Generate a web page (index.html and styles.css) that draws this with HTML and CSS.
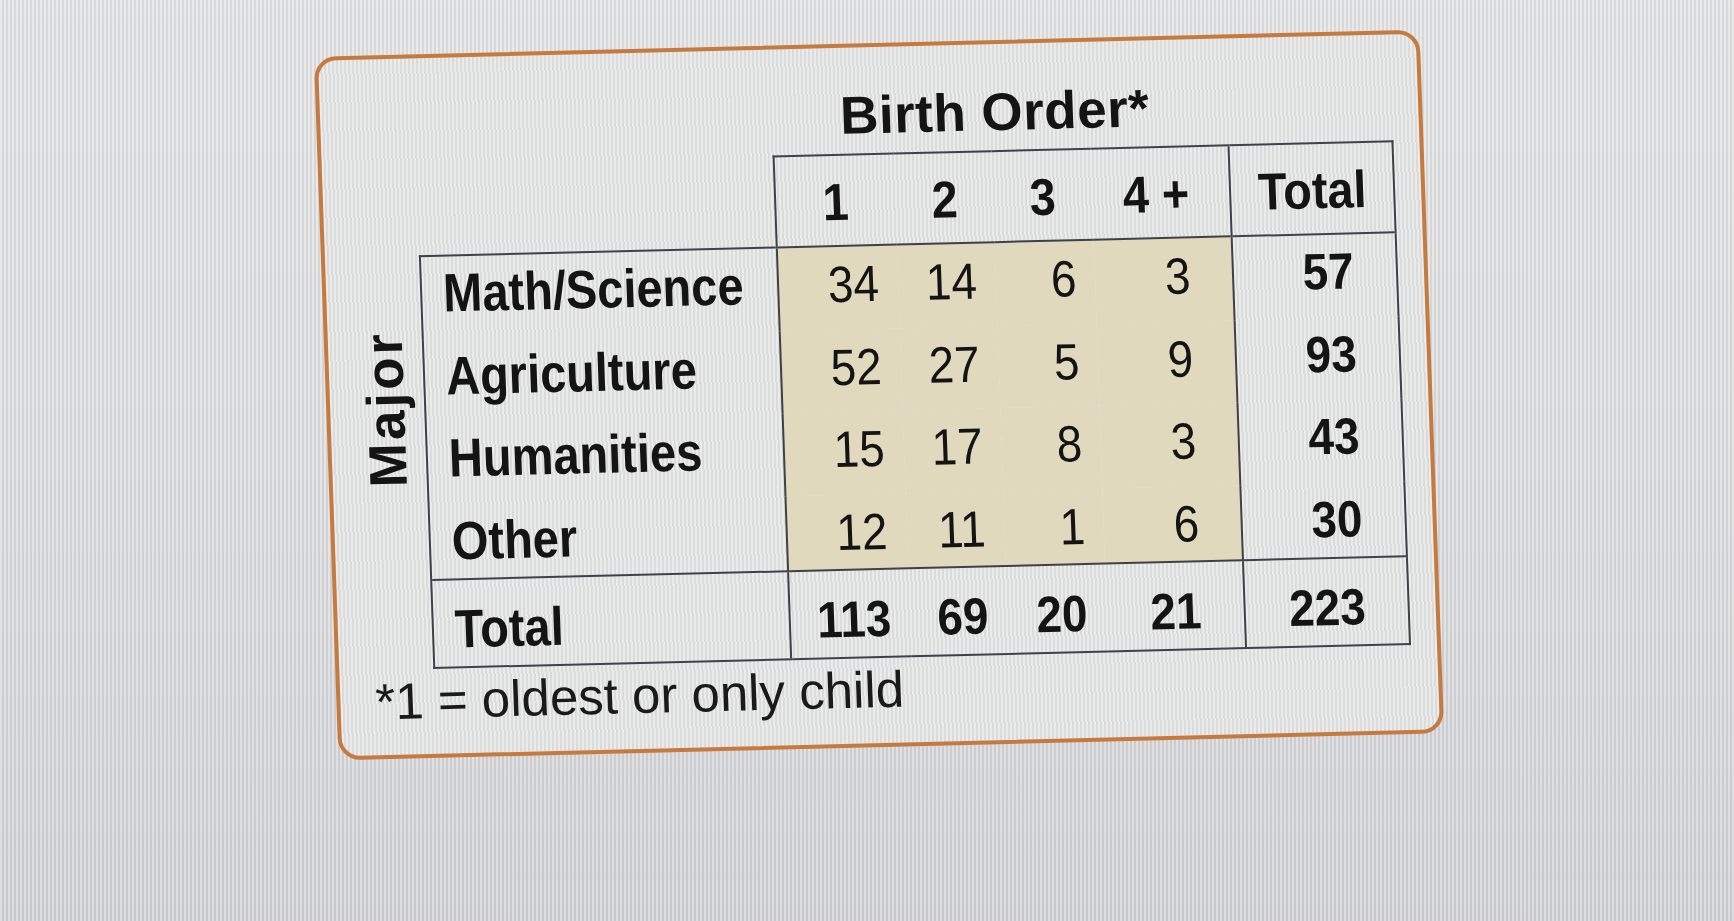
FILE: index.html
```html
<!DOCTYPE html>
<html lang="en">
<head>
<meta charset="utf-8">
<title>Birth Order by Major</title>
<link rel="stylesheet" href="styles.css">
</head>
<body>
<div class="stage">
  <div class="card">
    <table class="ct">
      <colgroup>
        <col class="w-major"><col class="w-label"><col class="w-c1"><col class="w-c2"><col class="w-c3"><col class="w-c4"><col class="w-tot">
      </colgroup>
      <tr class="r-title">
        <td></td><td></td><td colspan="4" class="title">Birth Order*</td><td></td>
      </tr>
      <tr class="r-head">
        <td></td><td></td>
        <td class="h h1"><span class="nc">1</span></td><td class="h"><span class="nc">2</span></td><td class="h"><span class="nc">3</span></td><td class="h h4"><span class="nc">4 +</span></td><td class="h tot"><span class="nc">Total</span></td>
      </tr>
      <tr class="r-body first r1">
        <td rowspan="4" class="major"><span class="major-text">Major</span></td>
        <td class="lab"><span class="nl">Math/Science</span></td>
        <td class="d d1"><span class="nr">34</span></td><td class="d d2"><span class="nr">14</span></td><td class="d d3"><span class="nr">6</span></td><td class="d d4"><span class="nr">3</span></td><td class="t"><span class="nr">57</span></td>
      </tr>
      <tr class="r-body r2">
        <td class="lab"><span class="nl">Agriculture</span></td>
        <td class="d d1"><span class="nr">52</span></td><td class="d d2"><span class="nr">27</span></td><td class="d d3"><span class="nr">5</span></td><td class="d d4"><span class="nr">9</span></td><td class="t"><span class="nr">93</span></td>
      </tr>
      <tr class="r-body r3">
        <td class="lab"><span class="nl">Humanities</span></td>
        <td class="d d1"><span class="nr">15</span></td><td class="d d2"><span class="nr">17</span></td><td class="d d3"><span class="nr">8</span></td><td class="d d4"><span class="nr">3</span></td><td class="t"><span class="nr">43</span></td>
      </tr>
      <tr class="r-body r4">
        <td class="lab"><span class="nl">Other</span></td>
        <td class="d d1"><span class="nr">12</span></td><td class="d d2"><span class="nr">11</span></td><td class="d d3"><span class="nr">1</span></td><td class="d d4"><span class="nr">6</span></td><td class="t"><span class="nr">30</span></td>
      </tr>
      <tr class="r-total">
        <td></td>
        <td class="lab"><span class="nl">Total</span></td>
        <td class="s d1"><span class="nr">113</span></td><td class="s d2"><span class="nr">69</span></td><td class="s d3"><span class="nr">20</span></td><td class="s d4"><span class="nr">21</span></td><td class="t"><span class="nr">223</span></td>
      </tr>
    </table>
    <p class="note">*1 = oldest or only child</p>
  </div>
</div>
</body>
</html>
```
FILE: styles.css
```css
html, body {
  margin: 0;
  padding: 0;
}

body {
  width: 1734px;
  height: 921px;
  overflow: hidden;
  font-family: "Liberation Sans", Arial, sans-serif;
  color: #141414;
  background-color: #dadadc;
  background-image:
    repeating-linear-gradient(90deg, rgba(255,255,255,0.28) 0 2px, rgba(110,120,130,0.09) 2px 4px),
    linear-gradient(180deg, #e2e2e2 0%, #dbdbdd 55%, #d0d0d3 100%);
}

.stage {
  padding: 43px 0 0 326px;
}

.card {
  box-sizing: border-box;
  width: 1106px;
  height: 704px;
  padding: 32px 0 0 17px;
  border: 4px solid #c57a40;
  border-radius: 22px;
  background-color: #e2e3e2;
  background-image: repeating-linear-gradient(90deg, rgba(255,255,255,0.3) 0 2px, rgba(110,120,130,0.07) 2px 4px);
  transform: rotate(-1.4deg) skewX(0.6deg);
}

.ct {
  border-collapse: collapse;
  table-layout: fixed;
  width: 1054px;
}

.w-major { width: 78px; }
.w-label { width: 357px; }
.w-c1 { width: 120px; }
.w-c2 { width: 98px; }
.w-c3 { width: 99px; }
.w-c4 { width: 138px; }
.w-tot { width: 164px; }

.ct td {
  padding: 0;
  font-family: "Liberation Sans", Arial, sans-serif;
  font-size: 51px;
  line-height: 1;
  white-space: nowrap;
  vertical-align: top;
}

.nc, .nl, .nr {
  display: inline-block;
  transform: scaleX(0.9);
}
.nc { transform-origin: center; }
.nl { transform-origin: left center; transform: scaleX(0.87); }
.nr { transform-origin: right center; }

.r-title { height: 75px; }
.r-head { height: 91px; }
.r1 { height: 84px; }
.r2 { height: 82px; }
.r3 { height: 83px; }
.r4 { height: 75px; }
.r-total { height: 88px; }

.ct td.title {
  font-weight: bold;
  font-size: 53px;
  text-align: center;
  vertical-align: bottom;
  padding: 0 10px 12px 0;
  letter-spacing: 0.5px;
}

.ct td.h {
  font-weight: bold;
  font-size: 52px;
  text-align: center;
  padding-top: 20px;
  border-top: 2px solid #3f4149;
}
.ct td.h4 { padding-right: 10px; }
.h1 { border-left: 2px solid #3f4149; }
.tot {
  border-left: 2px solid #3f4149;
  border-right: 2px solid #3f4149;
}

.ct td.major {
  text-align: center;
  vertical-align: middle;
}
.major-text {
  display: inline-block;
  writing-mode: vertical-rl;
  transform: rotate(180deg);
  font-weight: bold;
  font-size: 53px;
  letter-spacing: 3px;
  margin-top: -12px;
}

.ct td.lab {
  font-weight: bold;
  font-size: 54px;
  padding-left: 21px;
  padding-top: 9px;
  border-left: 2px solid #3f4149;
}

.first td {
  border-top: 2px solid #3f4149;
}
.first td.major { border-top: none; }

.ct td.d {
  background-color: #e0d9bd;
  text-align: right;
  padding-top: 12px;
}
.ct td.s {
  font-weight: bold;
  text-align: right;
}
.ct td.d1 { padding-right: 19px; border-left: 2px solid #3f4149; }
.ct td.d2 { padding-right: 19px; }
.ct td.d3 { padding-right: 19px; }
.ct td.d4 { padding-right: 42px; }

.ct td.t {
  font-weight: bold;
  text-align: right;
  padding-top: 11px;
  padding-right: 42px;
  border-left: 2px solid #3f4149;
  border-right: 2px solid #3f4149;
}

.r-total td {
  border-top: 2px solid #3f4149;
  border-bottom: 2px solid #3f4149;
}
.ct .r-total td.lab { padding-top: 21px; }
.ct .r-total td.s,
.ct .r-total td.t { padding-top: 23px; }
.r-total td:first-child {
  border-top: none;
  border-bottom: none;
}

.note {
  margin: 2px 0 0 18px;
  font-size: 51px;
  line-height: 60px;
  color: #1a1a1a;
}
```
